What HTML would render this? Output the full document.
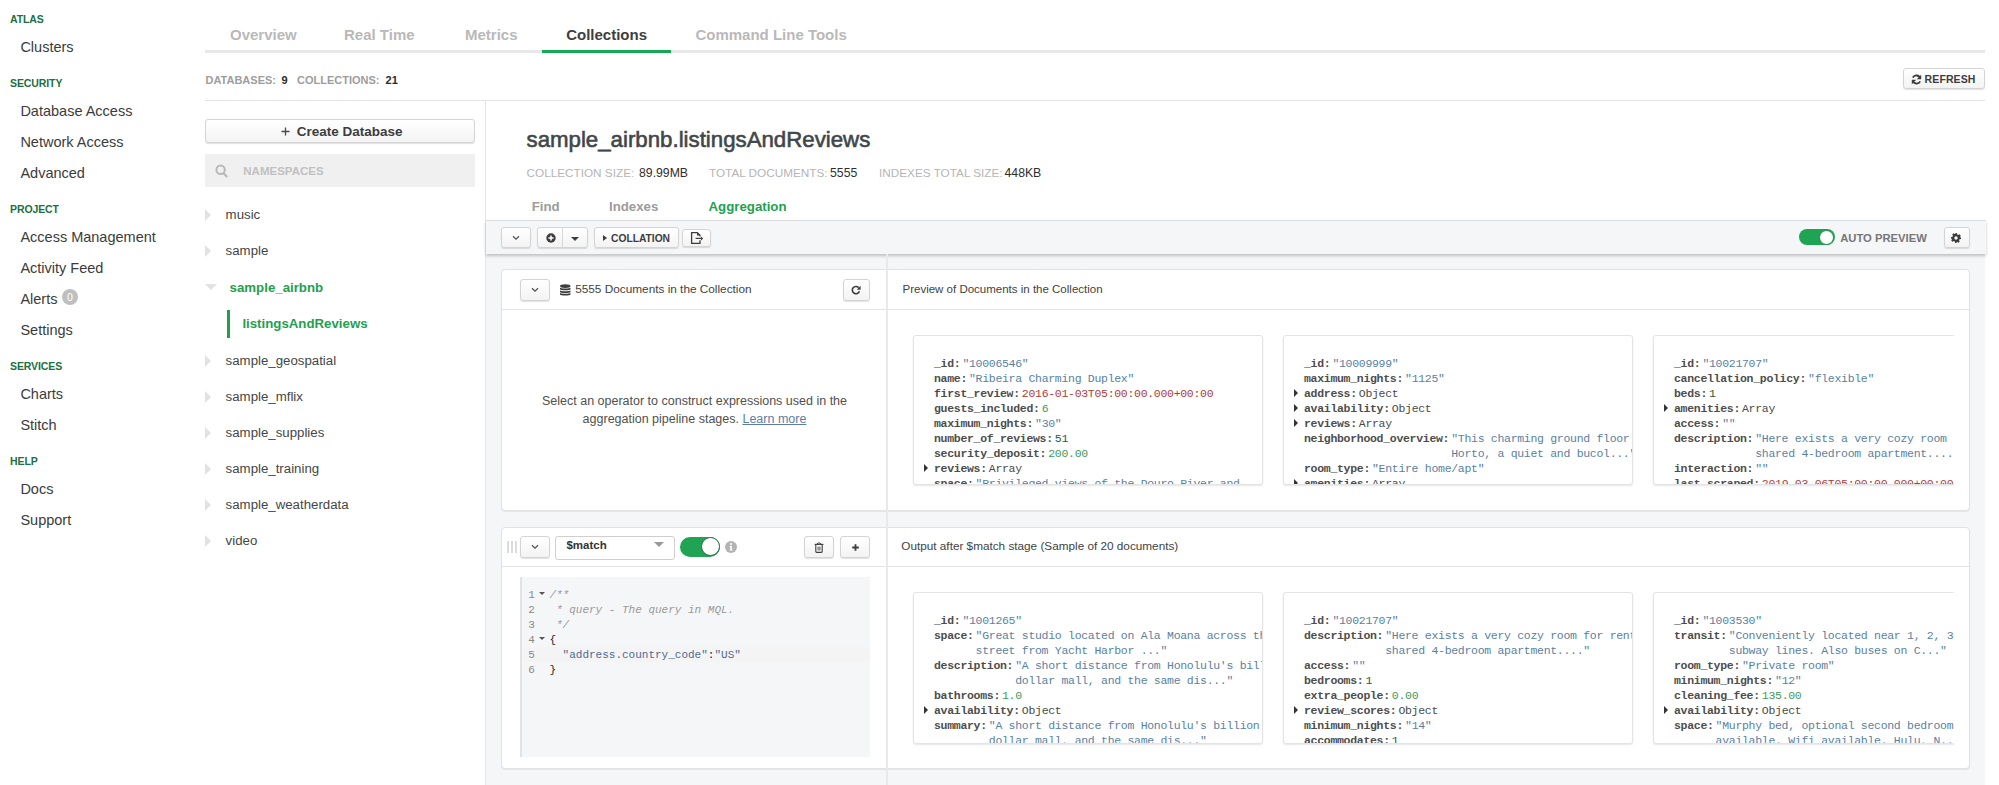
<!DOCTYPE html>
<html><head><meta charset="utf-8"><style>
html,body{margin:0;padding:0;background:#fff;width:1999px;height:785px;overflow:hidden;position:relative;font-family:"Liberation Sans", sans-serif;}
.t{position:absolute;line-height:1;white-space:nowrap;}
.r{position:absolute;}
.btn{position:absolute;box-sizing:border-box;border:1px solid #d4d4d4;border-radius:3px;background:linear-gradient(#fff,#f3f3f3);box-shadow:0 1px 1px rgba(0,0,0,0.12);}
.card{position:absolute;box-sizing:border-box;background:#fff;border:1px solid #e2e2e2;border-radius:4px;box-shadow:0 1px 1px rgba(0,0,0,0.07);}
.doc{position:absolute;box-sizing:border-box;background:#fff;border:1px solid #e4e4e4;border-radius:3px;box-shadow:0 1px 2px rgba(0,0,0,0.10);overflow:hidden;font-family:"Liberation Mono", monospace;font-size:11.5px;letter-spacing:-0.3px;line-height:15px;color:#444;}
.doc .l{position:relative;white-space:nowrap;padding-left:20px;}
.doc .k{font-weight:700;color:#4d4d4d;margin-right:2px;}
.doc .v{display:inline-block;vertical-align:top;white-space:pre;}
.doc .s{color:#5a7fa3;}
.doc .n{color:#3c9a5c;}
.doc .ni{color:#235c3b;}
.doc .d{color:#b03a3a;}
.doc .o{color:#4a4a4a;}
.doc .c{position:absolute;left:10px;top:3px;width:0;height:0;border-top:4px solid transparent;border-bottom:4px solid transparent;border-left:4px solid #333;}
</style></head>
<body>
<div class="t" style="left:10px;top:14.01px;font-size:10.5px;color:#21703f;font-weight:700;letter-spacing:-0.1px;">ATLAS</div>
<div class="t" style="left:10px;top:78.01px;font-size:10.5px;color:#21703f;font-weight:700;letter-spacing:-0.1px;">SECURITY</div>
<div class="t" style="left:10px;top:204.11px;font-size:10.5px;color:#21703f;font-weight:700;letter-spacing:-0.1px;">PROJECT</div>
<div class="t" style="left:10px;top:361.11px;font-size:10.5px;color:#21703f;font-weight:700;letter-spacing:-0.1px;">SERVICES</div>
<div class="t" style="left:10px;top:455.91px;font-size:10.5px;color:#21703f;font-weight:700;letter-spacing:-0.1px;">HELP</div>
<div class="t" style="left:20.4px;top:39.93px;font-size:14.5px;color:#3b3b3b;font-weight:400;">Clusters</div>
<div class="t" style="left:20.4px;top:104.13px;font-size:14.5px;color:#3b3b3b;font-weight:400;">Database Access</div>
<div class="t" style="left:20.4px;top:135.13px;font-size:14.5px;color:#3b3b3b;font-weight:400;">Network Access</div>
<div class="t" style="left:20.4px;top:166.13px;font-size:14.5px;color:#3b3b3b;font-weight:400;">Advanced</div>
<div class="t" style="left:20.4px;top:229.73px;font-size:14.5px;color:#3b3b3b;font-weight:400;">Access Management</div>
<div class="t" style="left:20.4px;top:260.73px;font-size:14.5px;color:#3b3b3b;font-weight:400;">Activity Feed</div>
<div class="t" style="left:20.4px;top:291.73px;font-size:14.5px;color:#3b3b3b;font-weight:400;">Alerts</div>
<div class="t" style="left:20.4px;top:322.73px;font-size:14.5px;color:#3b3b3b;font-weight:400;">Settings</div>
<div class="t" style="left:20.4px;top:386.83px;font-size:14.5px;color:#3b3b3b;font-weight:400;">Charts</div>
<div class="t" style="left:20.4px;top:418.13px;font-size:14.5px;color:#3b3b3b;font-weight:400;">Stitch</div>
<div class="t" style="left:20.4px;top:481.83px;font-size:14.5px;color:#3b3b3b;font-weight:400;">Docs</div>
<div class="t" style="left:20.4px;top:512.93px;font-size:14.5px;color:#3b3b3b;font-weight:400;">Support</div>
<div class="r" style="left:62px;top:289px;width:16px;height:16px;border-radius:50%;background:#bfbfbf;color:#fff;font-size:10.5px;line-height:16px;text-align:center;">0</div>
<div class="r" style="left:205px;top:50px;width:1780px;height:3px;background:#e8e8e8"></div>
<div class="r" style="left:542px;top:50px;width:129px;height:3px;background:#13aa52"></div>
<div class="t" style="left:230px;top:26.50px;font-size:15px;color:#b9b9b9;font-weight:700;">Overview</div>
<div class="t" style="left:344px;top:26.50px;font-size:15px;color:#b9b9b9;font-weight:700;">Real Time</div>
<div class="t" style="left:465px;top:26.50px;font-size:15px;color:#b9b9b9;font-weight:700;">Metrics</div>
<div class="t" style="left:566.2px;top:26.50px;font-size:15px;color:#3e3e3e;font-weight:700;">Collections</div>
<div class="t" style="left:695.4px;top:26.50px;font-size:15px;color:#b9b9b9;font-weight:700;">Command Line Tools</div>
<div class="t" style="left:205.5px;top:74.69px;font-size:11px;color:#9d9d9d;font-weight:700;">DATABASES:</div>
<div class="t" style="left:281.5px;top:74.69px;font-size:11px;color:#2b2b2b;font-weight:700;">9</div>
<div class="t" style="left:297px;top:74.69px;font-size:11px;color:#9d9d9d;font-weight:700;">COLLECTIONS:</div>
<div class="t" style="left:385.6px;top:74.69px;font-size:11px;color:#2b2b2b;font-weight:700;">21</div>
<div class="btn" style="left:1902.5px;top:68px;width:82px;height:21px;"></div>
<svg class="r" style="left:1910.5px;top:73.5px" width="11" height="11" viewBox="0 0 16 16"><path d="M13.5 6.2A6 6 0 0 0 2.6 5.2" stroke="#3d3d3d" stroke-width="2.6" fill="none"/><path d="M14.8 1.2V7.6H8.4z" fill="#3d3d3d"/><path d="M2.5 9.8A6 6 0 0 0 13.4 10.8" stroke="#3d3d3d" stroke-width="2.6" fill="none"/><path d="M1.2 14.8V8.4H7.6z" fill="#3d3d3d"/></svg>
<div class="t" style="left:1924.6px;top:74.11px;font-size:10.5px;color:#3d3d3d;font-weight:700;letter-spacing:0.1px;">REFRESH</div>
<div class="r" style="left:205px;top:100px;width:1780px;height:1px;background:#e2e2e2"></div>
<div class="r" style="left:485px;top:101px;width:1px;height:684px;background:#e6e6e6"></div>
<div class="btn" style="left:205px;top:119px;width:270px;height:24px;"></div>
<svg class="r" style="left:280.5px;top:127px" width="9" height="9" viewBox="0 0 9 9"><path d="M4.5 0.5V8.5M0.5 4.5H8.5" stroke="#4a4a4a" stroke-width="1.3"/></svg>
<div class="t" style="left:296.8px;top:125.27px;font-size:13.5px;color:#3d3d3d;font-weight:700;">Create Database</div>
<div class="r" style="left:205px;top:154px;width:270px;height:33px;background:#f0f0f0"></div>
<svg class="r" style="left:215px;top:164px" width="13" height="14" viewBox="0 0 13 14"><circle cx="5.6" cy="5.8" r="4.2" stroke="#b8b8b8" stroke-width="2" fill="none"/><path d="M8.6 9.2L12.2 12.9" stroke="#b8b8b8" stroke-width="2.2"/></svg>
<div class="t" style="left:243.3px;top:165.77px;font-size:11.5px;color:#c0c0c0;font-weight:700;">NAMESPACES</div>
<div class="r" style="left:205px;top:208.8px;width:0;height:0;border-top:6px solid transparent;border-bottom:6px solid transparent;border-left:6px solid #e2e2e2;"></div>
<div class="t" style="left:225.6px;top:208.08px;font-size:13.25px;color:#454545;font-weight:400;">music</div>
<div class="r" style="left:205px;top:244.8px;width:0;height:0;border-top:6px solid transparent;border-bottom:6px solid transparent;border-left:6px solid #e2e2e2;"></div>
<div class="t" style="left:225.6px;top:244.08px;font-size:13.25px;color:#454545;font-weight:400;">sample</div>
<div class="r" style="left:205px;top:284px;width:0;height:0;border-left:6px solid transparent;border-right:6px solid transparent;border-top:6px solid #e2e2e2;"></div>
<div class="t" style="left:229.6px;top:280.78px;font-size:13.25px;color:#1fa04f;font-weight:700;">sample_airbnb</div>
<div class="r" style="left:227px;top:309.5px;width:3px;height:28px;background:#1fa04f"></div>
<div class="t" style="left:242.4px;top:317.48px;font-size:13.25px;color:#1fa04f;font-weight:700;">listingsAndReviews</div>
<div class="r" style="left:205px;top:354.7px;width:0;height:0;border-top:6px solid transparent;border-bottom:6px solid transparent;border-left:6px solid #e2e2e2;"></div>
<div class="t" style="left:225.6px;top:353.98px;font-size:13.25px;color:#454545;font-weight:400;">sample_geospatial</div>
<div class="r" style="left:205px;top:390.7px;width:0;height:0;border-top:6px solid transparent;border-bottom:6px solid transparent;border-left:6px solid #e2e2e2;"></div>
<div class="t" style="left:225.6px;top:389.98px;font-size:13.25px;color:#454545;font-weight:400;">sample_mflix</div>
<div class="r" style="left:205px;top:426.7px;width:0;height:0;border-top:6px solid transparent;border-bottom:6px solid transparent;border-left:6px solid #e2e2e2;"></div>
<div class="t" style="left:225.6px;top:425.98px;font-size:13.25px;color:#454545;font-weight:400;">sample_supplies</div>
<div class="r" style="left:205px;top:462.7px;width:0;height:0;border-top:6px solid transparent;border-bottom:6px solid transparent;border-left:6px solid #e2e2e2;"></div>
<div class="t" style="left:225.6px;top:461.98px;font-size:13.25px;color:#454545;font-weight:400;">sample_training</div>
<div class="r" style="left:205px;top:498.7px;width:0;height:0;border-top:6px solid transparent;border-bottom:6px solid transparent;border-left:6px solid #e2e2e2;"></div>
<div class="t" style="left:225.6px;top:497.98px;font-size:13.25px;color:#454545;font-weight:400;">sample_weatherdata</div>
<div class="r" style="left:205px;top:534.7px;width:0;height:0;border-top:6px solid transparent;border-bottom:6px solid transparent;border-left:6px solid #e2e2e2;"></div>
<div class="t" style="left:225.6px;top:533.98px;font-size:13.25px;color:#454545;font-weight:400;">video</div>
<div class="t" style="left:526.5px;top:129.07px;font-size:22.25px;color:#40474b;font-weight:400;-webkit-text-stroke:0.6px #40474b;">sample_airbnb.listingsAndReviews</div>
<div class="t" style="left:526.5px;top:167.05px;font-size:11.75px;color:#b5b5b5;font-weight:400;">COLLECTION SIZE:</div>
<div class="t" style="left:639px;top:166.63px;font-size:12.25px;color:#2e2e2e;font-weight:400;">89.99MB</div>
<div class="t" style="left:709px;top:167.05px;font-size:11.75px;color:#b5b5b5;font-weight:400;">TOTAL DOCUMENTS:</div>
<div class="t" style="left:830px;top:166.63px;font-size:12.25px;color:#2e2e2e;font-weight:400;">5555</div>
<div class="t" style="left:879px;top:167.05px;font-size:11.75px;color:#b5b5b5;font-weight:400;">INDEXES TOTAL SIZE:</div>
<div class="t" style="left:1004.5px;top:166.63px;font-size:12.25px;color:#2e2e2e;font-weight:400;">448KB</div>
<div class="t" style="left:531.7px;top:199.78px;font-size:13.25px;color:#9c9c9c;font-weight:700;">Find</div>
<div class="t" style="left:609px;top:199.78px;font-size:13.25px;color:#9c9c9c;font-weight:700;">Indexes</div>
<div class="t" style="left:708.5px;top:199.78px;font-size:13.25px;color:#1fa04f;font-weight:700;">Aggregation</div>
<div class="r" style="left:486px;top:254px;width:1499px;height:531px;background:#f5f6f7"></div>
<div class="r" style="left:486px;top:220px;width:1500px;height:34px;box-sizing:border-box;background:#f5f6f7;border-top:1px solid #dcdcdc;box-shadow:0 2px 3px rgba(0,0,0,0.22);"></div>
<div class="btn" style="left:501px;top:227px;width:30px;height:21px;"></div>
<svg class="r" style="left:512px;top:235px" width="8" height="6" viewBox="0 0 8 6"><path d="M1 1.2L4 4.2L7 1.2" stroke="#555" stroke-width="1.3" fill="none"/></svg>
<div class="btn" style="left:537px;top:227px;width:51px;height:21px;"></div>
<div class="r" style="left:562px;top:228px;width:1px;height:19px;background:#d8d8d8"></div>
<svg class="r" style="left:545.5px;top:233px" width="10" height="10" viewBox="0 0 10 10"><circle cx="5" cy="5" r="4.7" fill="#3d3d3d"/><path d="M5 2.4V7.6M2.4 5H7.6" stroke="#fff" stroke-width="1.5"/></svg>
<div class="r" style="left:571px;top:236.5px;width:0;height:0;border-left:4px solid transparent;border-right:4px solid transparent;border-top:4.5px solid #3d3d3d;"></div>
<div class="btn" style="left:594px;top:227px;width:85px;height:21px;"></div>
<div class="r" style="left:603px;top:234.5px;width:0;height:0;border-top:3.3px solid transparent;border-bottom:3.3px solid transparent;border-left:4.3px solid #3d3d3d;"></div>
<div class="t" style="left:611px;top:234.32px;font-size:10.25px;color:#3d3d3d;font-weight:700;">COLLATION</div>
<div class="btn" style="left:682px;top:229px;width:29px;height:17.5px;"></div>
<svg class="r" style="left:689px;top:231px" width="16" height="14" viewBox="0 0 16 14"><path d="M11 5.6V4.2L8.3 1.6H2.6V12.4H11V9.2" stroke="#3d3d3d" stroke-width="1.3" fill="none"/><path d="M8 1.6V4.6H11z" fill="#3d3d3d"/><path d="M6.6 7.4H12.4" stroke="#3d3d3d" stroke-width="1.2"/><path d="M12 5.4L14.2 7.4L12 9.4z" fill="#3d3d3d"/></svg>
<div class="r" style="left:1799px;top:229px;width:36px;height:16px;border-radius:8px;background:#1ea452;"></div>
<div class="r" style="left:1819px;top:229.5px;width:15px;height:15px;border-radius:50%;background:#fff;box-sizing:border-box;border:1px solid #1c8a48;"></div>
<div class="t" style="left:1840.2px;top:233.48px;font-size:11.25px;color:#767676;font-weight:700;">AUTO PREVIEW</div>
<div class="btn" style="left:1943.5px;top:227px;width:26px;height:21px;"></div>
<svg class="r" style="left:1951.3px;top:233px" width="10" height="10" viewBox="0 0 16 16"><path fill="#3d3d3d" d="M6.6 0h2.8l.5 2.3c.6.2 1.1.4 1.6.8l2.1-1.1 2 2-1.1 2.1c.4.5.6 1 .8 1.6L16 6.6v2.8l-2.3.5c-.2.6-.4 1.1-.8 1.6l1.1 2.1-2 2-2.1-1.1c-.5.4-1 .6-1.6.8L9.4 16H6.6l-.5-2.3c-.6-.2-1.1-.4-1.6-.8L2.4 14l-2-2 1.1-2.1c-.4-.5-.6-1-.8-1.6L0 9.4V6.6l2.3-.5c.2-.6.4-1.1.8-1.6L2 2.4l2-2 2.1 1.1c.5-.4 1-.6 1.6-.8zM8 5.3A2.7 2.7 0 1 0 8 10.7 2.7 2.7 0 1 0 8 5.3z"/></svg>
<div class="card" style="left:501px;top:269px;width:1469px;height:242px;"></div>
<div class="r" style="left:502px;top:309px;width:1467px;height:1px;background:#e4e4e4"></div>
<div class="card" style="left:501px;top:527px;width:1469px;height:242px;"></div>
<div class="r" style="left:502px;top:566px;width:1467px;height:1px;background:#e4e4e4"></div>
<div class="r" style="left:886px;top:254px;width:2px;height:531px;background:#e8e9ea"></div>
<div class="btn" style="left:520px;top:279px;width:29.5px;height:21.5px;"></div>
<svg class="r" style="left:530.5px;top:287px" width="8" height="6" viewBox="0 0 8 6"><path d="M1 1.2L4 4.2L7 1.2" stroke="#555" stroke-width="1.3" fill="none"/></svg>
<svg class="r" style="left:560px;top:283.5px" width="10.5" height="12.5" viewBox="0 0 10.5 12.5"><ellipse cx="5.25" cy="2.1" rx="5.25" ry="1.9" fill="#3d3d3d"/><path d="M0 3.6C0 4.9 10.5 4.9 10.5 3.6V5.3C10.5 6.6 0 6.6 0 5.3Z" fill="#3d3d3d"/><path d="M0 6.2C0 7.5 10.5 7.5 10.5 6.2V7.9C10.5 9.2 0 9.2 0 7.9Z" fill="#3d3d3d"/><path d="M0 8.8C0 10.100000000000001 10.5 10.100000000000001 10.5 8.8V10.5C10.5 11.8 0 11.8 0 10.5Z" fill="#3d3d3d"/></svg>
<div class="t" style="left:575.2px;top:284.31px;font-size:11.8px;color:#424242;font-weight:400;">5555 Documents in the Collection</div>
<div class="btn" style="left:843px;top:279px;width:26.5px;height:21.5px;"></div>
<svg class="r" style="left:851px;top:284.5px" width="10" height="10" viewBox="0 0 16 16"><path d="M13.4 10A5.8 5.8 0 1 1 12.2 4.2" stroke="#3d3d3d" stroke-width="2.6" fill="none"/><path d="M15.4 1.2V7.4H9.2z" fill="#3d3d3d"/></svg>
<div class="t" style="left:902.5px;top:283.57px;font-size:11.5px;color:#424242;font-weight:400;">Preview of Documents in the Collection</div>
<div class="t" style="left:502px;top:392px;width:385px;text-align:center;font-size:12.5px;line-height:18px;color:#505050;white-space:normal;">Select an operator to construct expressions used in the<br>aggregation pipeline stages. <span style="color:#5c7ea4;text-decoration:underline;">Learn more</span></div>
<div class="r" style="left:507px;top:541px;width:2px;height:12px;background:#dcdcdc"></div>
<div class="r" style="left:511px;top:541px;width:2px;height:12px;background:#dcdcdc"></div>
<div class="r" style="left:515px;top:541px;width:2px;height:12px;background:#dcdcdc"></div>
<div class="btn" style="left:520px;top:536px;width:29.5px;height:21.5px;"></div>
<svg class="r" style="left:530.5px;top:544px" width="8" height="6" viewBox="0 0 8 6"><path d="M1 1.2L4 4.2L7 1.2" stroke="#555" stroke-width="1.3" fill="none"/></svg>
<div class="r" style="left:555px;top:536px;width:120px;height:23.5px;box-sizing:border-box;border:1px solid #cfcfcf;border-radius:3px;background:#fff;"></div>
<div class="t" style="left:566.4px;top:539.77px;font-size:11.5px;color:#333;font-weight:700;">$match</div>
<div class="r" style="left:654px;top:542px;width:0;height:0;border-left:5px solid transparent;border-right:5px solid transparent;border-top:5px solid #999;"></div>
<div class="r" style="left:680px;top:537px;width:40px;height:20px;border-radius:10px;background:#1ea452;"></div>
<div class="r" style="left:700.5px;top:537.2px;width:19px;height:19px;border-radius:50%;background:#fff;box-sizing:border-box;border:1px solid #2b7045;"></div>
<svg class="r" style="left:725px;top:541px" width="12" height="12" viewBox="0 0 12 12"><circle cx="6" cy="6" r="6" fill="#b3b3b3"/><circle cx="6" cy="3" r="1.1" fill="#fff"/><path d="M4.6 5H6.9V8.6H7.6V9.6H4.6V8.6H5.3V6H4.6z" fill="#fff"/></svg>
<div class="btn" style="left:804px;top:536px;width:29.5px;height:21.5px;"></div>
<svg class="r" style="left:814px;top:541.5px" width="10" height="11" viewBox="0 0 10 11"><path d="M0.6 2.4H9.4" stroke="#3d3d3d" stroke-width="1.1"/><path d="M3.2 2.3V1.6Q5 0 6.8 1.6V2.3" stroke="#3d3d3d" stroke-width="1" fill="none"/><path d="M1.8 2.6V9.6Q1.8 10.4 2.6 10.4H7.4Q8.2 10.4 8.2 9.6V2.6" stroke="#3d3d3d" stroke-width="1.1" fill="none"/><path d="M4.1 4.6V8.4M5.9 4.6V8.4" stroke="#3d3d3d" stroke-width="0.9"/></svg>
<div class="btn" style="left:840px;top:536px;width:29.5px;height:21.5px;"></div>
<svg class="r" style="left:851.5px;top:544px" width="7" height="7" viewBox="0 0 7 7"><path d="M3.5 0.2V6.8M0.2 3.5H6.8" stroke="#3d3d3d" stroke-width="1.8"/></svg>
<div class="t" style="left:901.3px;top:540.05px;font-size:11.75px;color:#424242;font-weight:400;">Output after $match stage (Sample of 20 documents)</div>
<div class="r" style="left:520px;top:577px;width:350px;height:180px;background:#f5f6f7;box-sizing:border-box;border-left:2px solid #e2e3e4;"></div>
<div class="r" style="left:522px;top:646.5px;width:348px;height:15px;background:#f4f4f4"></div>
<div class="t" style="left:528.3px;top:589.87px;font-size:11px;color:#8a8a8a;font-weight:400;font-family:'Liberation Mono', monospace;">1</div>
<div class="r" style="left:538.5px;top:592.3px;width:0;height:0;border-left:3px solid transparent;border-right:3px solid transparent;border-top:3.5px solid #555;"></div>
<div class="t" style="left:549.4px;top:589.87px;font-size:11px;color:#222;font-weight:400;font-family:'Liberation Mono', monospace;white-space:pre;"><span style="color:#999;font-style:italic">/**</span></div>
<div class="t" style="left:528.3px;top:604.87px;font-size:11px;color:#8a8a8a;font-weight:400;font-family:'Liberation Mono', monospace;">2</div>
<div class="t" style="left:549.4px;top:604.87px;font-size:11px;color:#222;font-weight:400;font-family:'Liberation Mono', monospace;white-space:pre;"><span style="color:#999;font-style:italic"> * query - The query in MQL.</span></div>
<div class="t" style="left:528.3px;top:619.87px;font-size:11px;color:#8a8a8a;font-weight:400;font-family:'Liberation Mono', monospace;">3</div>
<div class="t" style="left:549.4px;top:619.87px;font-size:11px;color:#222;font-weight:400;font-family:'Liberation Mono', monospace;white-space:pre;"><span style="color:#999;font-style:italic"> */</span></div>
<div class="t" style="left:528.3px;top:634.87px;font-size:11px;color:#8a8a8a;font-weight:400;font-family:'Liberation Mono', monospace;">4</div>
<div class="r" style="left:538.5px;top:637.3px;width:0;height:0;border-left:3px solid transparent;border-right:3px solid transparent;border-top:3.5px solid #555;"></div>
<div class="t" style="left:549.4px;top:634.87px;font-size:11px;color:#222;font-weight:400;font-family:'Liberation Mono', monospace;white-space:pre;"><span style="color:#222">{</span></div>
<div class="t" style="left:528.3px;top:649.87px;font-size:11px;color:#8a8a8a;font-weight:400;font-family:'Liberation Mono', monospace;">5</div>
<div class="t" style="left:549.4px;top:649.87px;font-size:11px;color:#222;font-weight:400;font-family:'Liberation Mono', monospace;white-space:pre;"><span style="color:#222">  </span><span style="color:#4d6a93">"address.country_code"</span><span style="color:#222">:</span><span style="color:#4d6a93">"US"</span></div>
<div class="t" style="left:528.3px;top:664.87px;font-size:11px;color:#8a8a8a;font-weight:400;font-family:'Liberation Mono', monospace;">6</div>
<div class="t" style="left:549.4px;top:664.87px;font-size:11px;color:#222;font-weight:400;font-family:'Liberation Mono', monospace;white-space:pre;"><span style="color:#222">}</span></div>
<div class="r" style="left:900px;top:330px;width:1053.5px;height:165px;overflow:hidden;">
<div class="doc" style="left:13px;top:5px;width:349.5px;height:149.5px;padding-top:19.5px;"><div class="l"><span class="k">_id:</span><span class="v s">"10006546"</span></div><div class="l"><span class="k">name:</span><span class="v s">"Ribeira Charming Duplex"</span></div><div class="l"><span class="k">first_review:</span><span class="v d">2016-01-03T05:00:00.000+00:00</span></div><div class="l"><span class="k">guests_included:</span><span class="v n">6</span></div><div class="l"><span class="k">maximum_nights:</span><span class="v s">"30"</span></div><div class="l"><span class="k">number_of_reviews:</span><span class="v ni">51</span></div><div class="l"><span class="k">security_deposit:</span><span class="v n">200.00</span></div><div class="l"><span class="c"></span><span class="k">reviews:</span><span class="v o">Array</span></div><div class="l"><span class="k">space:</span><span class="v s">"Privileged views of the Douro River and</span></div></div>
<div class="doc" style="left:383px;top:5px;width:349.5px;height:149.5px;padding-top:19.5px;"><div class="l"><span class="k">_id:</span><span class="v s">"10009999"</span></div><div class="l"><span class="k">maximum_nights:</span><span class="v s">"1125"</span></div><div class="l"><span class="c"></span><span class="k">address:</span><span class="v o">Object</span></div><div class="l"><span class="c"></span><span class="k">availability:</span><span class="v o">Object</span></div><div class="l"><span class="c"></span><span class="k">reviews:</span><span class="v o">Array</span></div><div class="l"><span class="k">neighborhood_overview:</span><span class="v s">"This charming ground floor flat is located
Horto, a quiet and bucol..."</span></div><div class="l"><span class="k">room_type:</span><span class="v s">"Entire home/apt"</span></div><div class="l"><span class="c"></span><span class="k">amenities:</span><span class="v o">Array</span></div></div>
<div class="doc" style="left:753px;top:5px;width:349.5px;height:149.5px;padding-top:19.5px;"><div class="l"><span class="k">_id:</span><span class="v s">"10021707"</span></div><div class="l"><span class="k">cancellation_policy:</span><span class="v s">"flexible"</span></div><div class="l"><span class="k">beds:</span><span class="v ni">1</span></div><div class="l"><span class="c"></span><span class="k">amenities:</span><span class="v o">Array</span></div><div class="l"><span class="k">access:</span><span class="v s">""</span></div><div class="l"><span class="k">description:</span><span class="v s">"Here exists a very cozy room for rent in a
shared 4-bedroom apartment...."</span></div><div class="l"><span class="k">interaction:</span><span class="v s">""</span></div><div class="l"><span class="k">last_scraped:</span><span class="v d">2019-03-06T05:00:00.000+00:00</span></div></div>
</div>
<div class="r" style="left:900px;top:587px;width:1053.5px;height:165px;overflow:hidden;">
<div class="doc" style="left:13px;top:5px;width:349.5px;height:151.5px;padding-top:19.5px;"><div class="l"><span class="k">_id:</span><span class="v s">"1001265"</span></div><div class="l"><span class="k">space:</span><span class="v s">"Great studio located on Ala Moana across the
street from Yacht Harbor ..."</span></div><div class="l"><span class="k">description:</span><span class="v s">"A short distance from Honolulu's billion
dollar mall, and the same dis..."</span></div><div class="l"><span class="k">bathrooms:</span><span class="v n">1.0</span></div><div class="l"><span class="c"></span><span class="k">availability:</span><span class="v o">Object</span></div><div class="l"><span class="k">summary:</span><span class="v s">"A short distance from Honolulu's billion
dollar mall, and the same dis..."</span></div></div>
<div class="doc" style="left:383px;top:5px;width:349.5px;height:151.5px;padding-top:19.5px;"><div class="l"><span class="k">_id:</span><span class="v s">"10021707"</span></div><div class="l"><span class="k">description:</span><span class="v s">"Here exists a very cozy room for rent in a
shared 4-bedroom apartment...."</span></div><div class="l"><span class="k">access:</span><span class="v s">""</span></div><div class="l"><span class="k">bedrooms:</span><span class="v ni">1</span></div><div class="l"><span class="k">extra_people:</span><span class="v n">0.00</span></div><div class="l"><span class="c"></span><span class="k">review_scores:</span><span class="v o">Object</span></div><div class="l"><span class="k">minimum_nights:</span><span class="v s">"14"</span></div><div class="l"><span class="k">accommodates:</span><span class="v ni">1</span></div></div>
<div class="doc" style="left:753px;top:5px;width:349.5px;height:151.5px;padding-top:19.5px;"><div class="l"><span class="k">_id:</span><span class="v s">"1003530"</span></div><div class="l"><span class="k">transit:</span><span class="v s">"Conveniently located near 1, 2, 3
subway lines. Also buses on C..."</span></div><div class="l"><span class="k">room_type:</span><span class="v s">"Private room"</span></div><div class="l"><span class="k">minimum_nights:</span><span class="v s">"12"</span></div><div class="l"><span class="k">cleaning_fee:</span><span class="v n">135.00</span></div><div class="l"><span class="c"></span><span class="k">availability:</span><span class="v o">Object</span></div><div class="l"><span class="k">space:</span><span class="v s">"Murphy bed, optional second bedroom
available. Wifi available. Hulu, N..."</span></div></div>
</div>
</body></html>
